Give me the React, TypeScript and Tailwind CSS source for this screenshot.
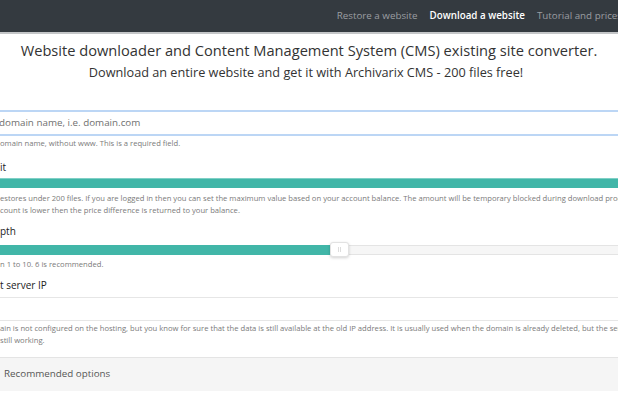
import React from 'react';

const font = { fontFamily: '"Open Sans", "Noto Sans", sans-serif' };

function Help({ children }: { children: React.ReactNode }) {
  return <div className="text-[7.65px] leading-[12px] text-[#7a7a7a] whitespace-nowrap">{children}</div>;
}

export default function App() {
  return (
    <div className="w-[618px] h-[394px] overflow-hidden bg-white" style={font}>
      {/* Top navigation */}
      <div className="h-[32px] bg-[#343a40] flex items-center justify-end gap-[12px] text-[9.8px] whitespace-nowrap -mr-[4px]">
        <span className="text-[#9b9ea2]">Restore a website</span>
        <span className="text-white font-semibold">Download a website</span>
        <span className="text-[#9b9ea2]">Tutorial and prices</span>
      </div>
      <div className="h-[2px] bg-[#c4c6c8]" />

      {/* Heading */}
      <div className="text-center text-[#333] pt-[5px]">
        <h1 className="text-[14.65px] leading-[22px] whitespace-nowrap">
          Website downloader and Content Management System (CMS) existing site converter.
        </h1>
        <h2 className="text-[12.7px] leading-[20px] mt-[1px] whitespace-nowrap -ml-[6px]">
          Download an entire website and get it with Archivarix CMS - 200 files free!
        </h2>
      </div>

      {/* Form */}
      <div className="mt-[28px] w-[640px]">
        <div className="-ml-[10px] h-[26px] border-2 border-[#bcd6f5] flex items-center pl-[7px]">
          <span className="text-[9.8px] text-[#6f6f6f]">domain name, i.e. domain.com</span>
        </div>
        <div className="mt-[1px]">
          <Help>omain name, without www. This is a required field.</Help>
        </div>

        <div className="w-[624px] flex justify-between items-center h-[20px] mt-[8px] text-[10px] text-[#222]">
          <span>it</span>
          <span>2</span>
        </div>
        <div className="-ml-[10px] mt-[1px] h-[10px] bg-[#41b6a8] border-t border-[#7fd0c6]" />

        <div className="mt-[4px]">
          <Help>estores under 200 files. If you are logged in then you can set the maximum value based on your account balance. The amount will be temporary blocked during download process</Help>
          <Help>count is lower then the price difference is returned to your balance.</Help>
        </div>

        <div className="h-[20px] flex items-center mt-[5px] text-[10px] text-[#222]">pth</div>
        <div className="relative mt-[1px] h-[15px] flex items-center">
          <div className="w-[331px] h-[10px] bg-[#41b6a8]" />
          <div className="flex-1 h-[10px] bg-[#f6f6f6] border border-[#e4e4e4]" />
          <div className="absolute left-[330px] top-0 w-[19px] h-[15px] bg-white border border-[#e2e2e2] rounded-[3px] shadow-[0_1px_3px_rgba(0,0,0,0.18)] flex items-center justify-center gap-[1px]">
            <span className="w-px h-[5px] bg-[#ddd]" />
            <span className="w-px h-[5px] bg-[#ddd]" />
          </div>
        </div>
        <div className="mt-[1px]">
          <Help>n 1 to 10. 6 is recommended.</Help>
        </div>

        <div className="h-[20px] flex items-center mt-[5px] text-[10px] text-[#222]">t server IP</div>
        <div className="-ml-[10px] mt-[2px] h-[24px] border border-[#e6e6e6]" />
        <div className="mt-[1px] leading-[13px]">
          <Help>ain is not configured on the hosting, but you know for sure that the data is still available at the old IP address. It is usually used when the domain is already deleted, but the server</Help>
          <Help>still working.</Help>
        </div>

        <div className="mt-[11px] -ml-[10px] h-[34px] bg-[#f5f5f5] border-t border-[#e4e4e4] flex items-center pl-[14px] text-[9.8px] text-[#555]">
          Recommended options
        </div>
      </div>
    </div>
  );
}
